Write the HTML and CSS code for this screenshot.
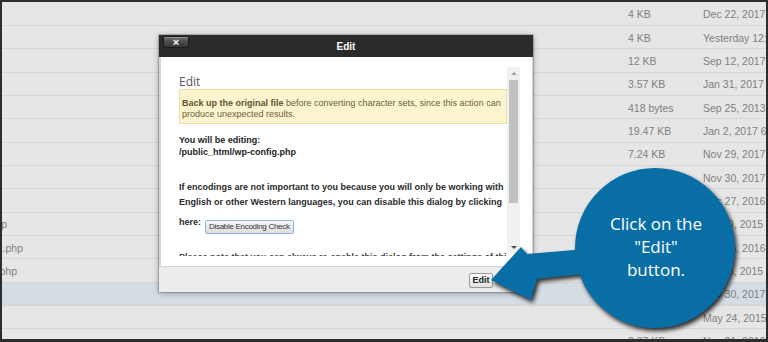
FILE: index.html
```html
<!DOCTYPE html>
<html>
<head>
<meta charset="utf-8">
<link rel="stylesheet" href="styles.css">
</head>
<body>
<div class="screen">
  <div class="rows">
    <div class="row"><div class="name"></div><div class="size">4 KB</div><div class="date">Dec 22, 2017 1:05 PM</div></div>
    <div class="row"><div class="name"></div><div class="size">4 KB</div><div class="date">Yesterday 12:41 PM</div></div>
    <div class="row"><div class="name"></div><div class="size">12 KB</div><div class="date">Sep 12, 2017 9:14 AM</div></div>
    <div class="row"><div class="name"></div><div class="size">3.57 KB</div><div class="date">Jan 31, 2017 3:22 PM</div></div>
    <div class="row"><div class="name"></div><div class="size">418 bytes</div><div class="date">Sep 25, 2013 7:10 PM</div></div>
    <div class="row"><div class="name"></div><div class="size">19.47 KB</div><div class="date">Jan 2, 2017 6:40 PM</div></div>
    <div class="row"><div class="name"></div><div class="size">7.24 KB</div><div class="date">Nov 29, 2017 4:02 PM</div></div>
    <div class="row"><div class="name"></div><div class="size">5.32 KB</div><div class="date">Nov 30, 2017 8:18 AM</div></div>
    <div class="row"><div class="name"></div><div class="size">364 bytes</div><div class="date">Dec 27, 2016 2:55 PM</div></div>
    <div class="row"><div class="name w7"><span>wp-signup.php</span></div><div class="size">1.58 KB</div><div class="date">Apr 19, 2015 5:37 AM</div></div>
    <div class="row"><div class="name w23"><span>xmlrpc.php</span></div><div class="size">3.21 KB</div><div class="date">Aug 16, 2016 1:11 PM</div></div>
    <div class="row"><div class="name w16"><span>wp-trackback.php</span></div><div class="size">4.5 KB</div><div class="date">Oct 25, 2015 9:03 PM</div></div>
    <div class="row selected"><div class="name"></div><div class="size">2.87 KB</div><div class="date">Nov 30, 2017 8:22 AM</div></div>
    <div class="row"><div class="name"></div><div class="size">418 bytes</div><div class="date">May 24, 2015 6:48 PM</div></div>
    <div class="row"><div class="name"></div><div class="size">2.37 KB</div><div class="date">Nov 21, 2016 3:30 PM</div></div>
  </div>

  <div class="dialog">
    <div class="titlebar">
      <button class="close">×</button>
      <div class="title">Edit</div>
    </div>
    <div class="body">
      <div class="pane">
        <div class="content">
          <h2 class="heading">Edit</h2>
          <div class="warning"><b>Back up the original file</b> before converting character sets, since this action can<br>produce unexpected results.</div>
          <div class="file">You will be editing:<br>/public_html/wp-config.php</div>
          <div class="para">If encodings are not important to you because you will only be working with<br>English or other Western languages, you can disable this dialog by clicking</div>
          <div class="here"><span class="here-label">here:</span><button class="disable">Disable Encoding Check</button></div>
          <div class="para cut">Please note that you can always re-enable this dialog from the settings of this file manager.</div>
        </div>
        <div class="scrollbar">
          <div class="sb-up"><i class="tri-up"></i></div>
          <div class="sb-thumb"></div>
          <div class="sb-track"></div>
          <div class="sb-down"><i class="tri-down"></i></div>
        </div>
      </div>
    </div>
    <div class="footer">
      <button class="edit-btn">Edit</button>
    </div>
  </div>

  <svg class="callout" width="768" height="342" viewBox="0 0 768 342">
    <g class="callout-shape">
      <polygon points="491,280 521,247 527,254 610,247 610,271 537,279 531,300"/>
      <circle cx="655" cy="248" r="80"/>
    </g>
  </svg>
  <div class="callout-text">Click on the<br>"Edit"<br>button.</div>
</div>
</body>
</html>
```
FILE: styles.css
```css
* { box-sizing: border-box; }
html, body { margin: 0; padding: 0; }
body { width: 768px; height: 342px; overflow: hidden; background: #2d2d2d; }

.screen {
  position: relative;
  width: 768px;
  height: 342px;
  border-style: solid;
  border-color: #2d2d2d;
  border-width: 2px 2px 3px 2px;
  background: #e6e6e6;
  overflow: hidden;
  font-family: "Liberation Sans", Arial, sans-serif;
}

.rows { padding-top: 0.7px; }
.row {
  height: 23.33px;
  border-bottom: 1px solid #d6d6d6;
  display: grid;
  grid-template-columns: 626px 75px 63px;
  align-items: center;
  padding-top: 1px;
  font-size: 10.5px;
  color: #7f7f7f;
  white-space: nowrap;
}
.row.selected { background: #d3dde3; }
.size, .date { overflow: hidden; }
.name {
  display: flex;
  justify-content: flex-end;
  overflow: hidden;
  justify-self: start;
}
.w7 { width: 5px; }
.w23 { width: 21px; }
.w16 { width: 15px; }
.name span { flex: none; }

/* dialog */
.dialog {
  position: absolute;
  left: 157px;
  top: 33px;
  width: 374px;
  background: #fff;
  box-shadow: 0 0 0 1px rgba(0,0,0,0.18), 0 1px 6px rgba(0,0,0,0.35);
  display: flex;
  flex-direction: column;
}
.titlebar {
  height: 22px;
  background: #2b2b2b;
  display: grid;
  grid-template-columns: 1fr auto 1fr;
  align-items: center;
}
.close {
  justify-self: start;
  align-self: start;
  margin: 1px 0 0 4px;
  width: 26px;
  height: 12px;
  padding: 0;
  border: 1px solid #1c1c1c;
  border-radius: 2px;
  background: linear-gradient(#707070, #474747 55%, #363636);
  color: #fff;
  font: bold 11px/9px "Liberation Sans", Arial, sans-serif;
  box-shadow: inset 0 1px 0 rgba(255,255,255,0.25);
}
.title {
  color: #fff;
  font-weight: bold;
  font-size: 10px;
}

.body {
  height: 209px;
  padding: 10px 12px 10px 18px;
  display: flex;
  border-left: 2px solid #d6d6d6;
  border-right: 1px solid #d8d8d8;
}
.pane {
  flex: 1;
  min-width: 0;
  display: flex;
  height: 189px;
  overflow: hidden;
}
.content {
  flex: 1;
  min-width: 0;
  overflow: hidden;
  font-size: 9px;
  color: #222;
}
.heading {
  margin: 7px 0 0;
  font: normal 12px/15px "Open Sans", sans-serif;
  color: #555;
}
.warning {
  height: 35px;
  border: 1px solid #efdf9f;
  background: #fcf4cf;
  padding: 8px 4px 3px 2px;
  line-height: 11px;
  color: #70603a;
  white-space: nowrap;
  overflow: hidden;
}
.warning b { color: #62532d; }
.file {
  margin-top: 10px;
  font-weight: bold;
  line-height: 12px;
  color: #1e1e1e;
}
.para {
  margin-top: 22px;
  font-weight: bold;
  line-height: 15px;
  color: #2a2a2a;
  white-space: nowrap;
}
.here {
  display: flex;
  align-items: flex-start;
  margin-top: 5px;
  font-weight: bold;
  line-height: 15px;
  color: #2a2a2a;
}
.disable {
  margin: 5px 0 0 4px;
  height: 14px;
  width: 89px;
  padding: 0 0 0 3px;
  text-align: left;
  border: 1px solid #8fb3de;
  border-radius: 2px;
  background: linear-gradient(#f6f6f6, #dedede);
  font: 8px/12px "Liberation Sans", Arial, sans-serif;
  letter-spacing: -0.3px;
  color: #333;
  white-space: nowrap;
  overflow: hidden;
}
.para.cut { margin-top: 16px; color: #444; }

.scrollbar {
  flex: none;
  width: 13px;
  height: 186px;
  background: #f1f1f1;
  display: flex;
  flex-direction: column;
}
.sb-up, .sb-down {
  display: flex;
  align-items: center;
  justify-content: center;
}
.sb-up { height: 13px; }
.sb-down { height: 11px; }
.sb-thumb {
  height: 123px;
  margin: 0 2px;
  background: #c1c1c1;
}
.sb-track { flex: 1; }
.tri-up {
  width: 0; height: 0;
  border-left: 3px solid transparent;
  border-right: 3px solid transparent;
  border-bottom: 3px solid #a3a3a3;
}
.tri-down {
  width: 0; height: 0;
  border-left: 3px solid transparent;
  border-right: 3px solid transparent;
  border-top: 3px solid #505050;
}

.footer {
  height: 26px;
  border-top: 1px solid #d3d3d3;
  background: #ececec;
  display: flex;
  justify-content: flex-end;
  align-items: center;
  padding: 1px 40px 0 0;
}
.edit-btn {
  height: 15px;
  width: 24px;
  padding: 0;
  border: 1px solid #9a9a9a;
  border-radius: 2px;
  background: linear-gradient(#fbfbfb, #e2e2e2);
  font: bold 9px/13px "Liberation Sans", Arial, sans-serif;
  color: #222;
}

/* callout annotation */
.callout {
  position: absolute;
  left: -2px;
  top: -2px;
}
.callout-shape {
  fill: #0a6ea6;
  filter: drop-shadow(2px 3px 2px rgba(0,0,0,0.8));
}
.callout-text {
  position: absolute;
  left: 573px;
  top: 210px;
  width: 162px;
  text-align: center;
  font: 17px/23px "Open Sans", sans-serif;
  color: #fff;
}
```
